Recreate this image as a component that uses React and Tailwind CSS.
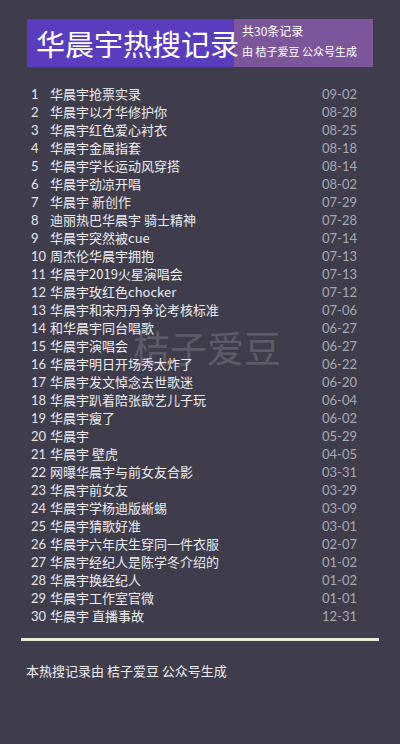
import React from "react";

const rows = [
  ["华晨宇抢票实录", "09-02"],
  ["华晨宇以才华修护你", "08-28"],
  ["华晨宇红色爱心衬衣", "08-25"],
  ["华晨宇金属指套", "08-18"],
  ["华晨宇学长运动风穿搭", "08-14"],
  ["华晨宇劲凉开唱", "08-02"],
  ["华晨宇 新创作", "07-29"],
  ["迪丽热巴华晨宇 骑士精神", "07-28"],
  ["华晨宇突然被cue", "07-14"],
  ["周杰伦华晨宇拥抱", "07-13"],
  ["华晨宇2019火星演唱会", "07-13"],
  ["华晨宇玫红色chocker", "07-12"],
  ["华晨宇和宋丹丹争论考核标准", "07-06"],
  ["和华晨宇同台唱歌", "06-27"],
  ["华晨宇演唱会", "06-27"],
  ["华晨宇明日开场秀太炸了", "06-22"],
  ["华晨宇发文悼念去世歌迷", "06-20"],
  ["华晨宇趴着陪张歆艺儿子玩", "06-04"],
  ["华晨宇瘦了", "06-02"],
  ["华晨宇", "05-29"],
  ["华晨宇 壁虎", "04-05"],
  ["网曝华晨宇与前女友合影", "03-31"],
  ["华晨宇前女友", "03-29"],
  ["华晨宇学杨迪版蜥蜴", "03-09"],
  ["华晨宇猜歌好准", "03-01"],
  ["华晨宇六年庆生穿同一件衣服", "02-07"],
  ["华晨宇经纪人是陈学冬介绍的", "01-02"],
  ["华晨宇换经纪人", "01-02"],
  ["华晨宇工作室官微", "01-01"],
  ["华晨宇 直播事故", "12-31"],
];

const cjk = "font-['Noto_Sans_CJK_SC',sans-serif]";
const num = "font-['Lato','Noto_Sans_CJK_SC',sans-serif]";

export default function App() {
  return (
    <div className={`relative w-[400px] min-h-[744px] bg-[#3f3d4b] overflow-hidden ${cjk}`}>
      <div className="pt-[19px] px-[27px]">
        <div className="h-[48px] flex items-center bg-[linear-gradient(to_right,#5a3cbf_207px,#7c569b_207px)]">
          <div className="pl-[9px] text-[29px] leading-[48px] text-white whitespace-nowrap">华晨宇热搜记录</div>
          <div className="ml-[3px] flex flex-col text-white">
            <div className="text-[12px] leading-[16px] mt-[-4px]">共30条记录</div>
            <div className="text-[11px] leading-[16px] mt-[4px]">由 桔子爱豆 公众号生成</div>
          </div>
        </div>
      </div>

      <div className="mt-[18px] pl-[31px] pr-[43px] flex flex-col">
        {rows.map(([t, d], i) => (
          <div key={i} className="h-[18px] flex items-center text-[13px] leading-[18px]">
            <span className={`w-[19px] text-[#e6e6ea] ${num}`}>{i + 1}</span>
            <span className="flex-1 text-[#ececef] whitespace-nowrap">{t}</span>
            <span className={`text-[#a9a8b2] ${num}`}>{d}</span>
          </div>
        ))}
      </div>

      <div className="mt-[13px] mx-[21px] h-[3px] bg-[#ece9d8]" />

      <div className="mt-[21px] pl-[26px] text-[13px] leading-[18px] text-[#ececef]">本热搜记录由 桔子爱豆 公众号生成</div>

      <div className="absolute left-[133px] top-[329px] text-[37px] leading-[37px] text-white/[0.17] whitespace-nowrap pointer-events-none">桔子爱豆</div>
    </div>
  );
}
